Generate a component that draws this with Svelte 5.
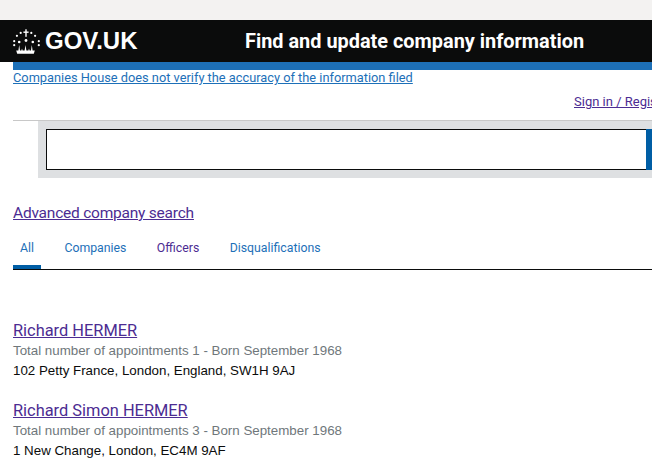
<script>
  const tabs = [
    { label: 'All', active: true },
    { label: 'Companies' },
    { label: 'Officers', visited: true },
    { label: 'Disqualifications' }
  ];

  const results = [
    {
      name: 'Richard HERMER',
      meta: 'Total number of appointments 1 - Born September 1968',
      address: '102 Petty France, London, England, SW1H 9AJ'
    },
    {
      name: 'Richard Simon HERMER',
      meta: 'Total number of appointments 3 - Born September 1968',
      address: '1 New Change, London, EC4M 9AF'
    }
  ];
</script>

<div class="page">
  <div class="topstrip"></div>

  <header class="header">
    <a class="logo" href="#top">
      <svg class="crown" viewBox="0 0 27 25" width="27" height="25" aria-hidden="true">
        <g fill="#fff">
          <rect x="12.3" y="0.3" width="1.4" height="7.5" />
          <rect x="10.4" y="2.5" width="5.2" height="1.4" />
          <circle cx="7.7" cy="3.9" r="1.1" />
          <circle cx="18.3" cy="3.9" r="1.1" />
          <circle cx="3.9" cy="6.8" r="1.1" />
          <circle cx="22.1" cy="6.8" r="1.1" />
          <circle cx="1.2" cy="12.2" r="1.1" />
          <circle cx="25.8" cy="12.2" r="1.1" />
          <circle cx="1.2" cy="16.2" r="1.1" />
          <circle cx="25.8" cy="16.2" r="1.1" />
          <circle cx="13" cy="11.5" r="1.4" />
          <circle cx="6.2" cy="13" r="1.3" />
          <circle cx="19.8" cy="13" r="1.3" />
          <path d="M4.2 24.8 3.2 21.4h2.2l.8-5.4.8 5.4h1.4l.6-2 .6 2h2l.9-5.4.9 5.4h2l.6-2 .6 2h1.4l.8-5.4.8 5.4h2.2l-1 3.4z" />
        </g>
      </svg>
      <span class="wordmark">GOV.UK</span>
    </a>
    <span class="service">Find and update company information</span>
  </header>

  <div class="bluebar"></div>

  <a class="notice" href="#top">Companies House does not verify the accuracy of the information filed</a>

  <div class="signin"><a href="#top">Sign in / Register</a></div>

  <div class="rule"></div>

  <div class="searchband">
    <div class="searchinput"></div>
    <div class="searchbtn"></div>
  </div>

  <a class="advanced" href="#top">Advanced company search</a>

  <nav class="tabs">
    {#each tabs as tab}
      <a href="#top" class="tab" class:active={tab.active} class:visited={tab.visited}>{tab.label}</a>
    {/each}
  </nav>

  <ul class="results">
    {#each results as r}
      <li>
        <a class="name" href="#top">{r.name}</a>
        <p class="meta">{r.meta}</p>
        <p class="address">{r.address}</p>
      </li>
    {/each}
  </ul>
</div>

<style>
  :global(body) {
    margin: 0;
    background: #fff;
    overflow: hidden;
  }

  .page {
    width: 652px;
    height: 468px;
    overflow: hidden;
    font-family: Roboto, sans-serif;
  }

  .topstrip {
    height: 20px;
    background: #f3f2f1;
  }

  .header {
    display: flex;
    align-items: center;
    height: 42px;
    background: #0b0c0c;
    color: #fff;
    padding-left: 13px;
    box-sizing: border-box;
  }

  .logo {
    display: flex;
    align-items: center;
    gap: 5px;
    width: 232px;
    color: #fff;
    text-decoration: none;
  }

  .wordmark {
    font: 700 24px 'Liberation Sans', sans-serif;
  }

  .service {
    font: 700 19.9px Roboto, sans-serif;
    white-space: nowrap;
  }

  .bluebar {
    height: 8px;
    margin-left: 13px;
    background: #1d70b8;
  }

  .notice {
    display: block;
    margin-left: 13px;
    width: max-content;
    font-size: 12.8px;
    line-height: 16px;
    color: #1d70b8;
  }

  .signin {
    margin-top: 8px;
    padding-left: 574px;
    width: 200px;
    font-size: 13px;
    line-height: 16px;
    white-space: nowrap;
  }

  .signin a {
    color: #4c2c92;
  }

  .rule {
    height: 1px;
    margin: 10px 0 0 13px;
    background: #c8c8c8;
  }

  .searchband {
    display: flex;
    height: 57px;
    margin-left: 38px;
    padding: 8px 0;
    box-sizing: border-box;
    background: #dee0e2;
  }

  .searchinput {
    width: 600px;
    height: 41px;
    margin-left: 8px;
    box-sizing: border-box;
    border: 1px solid #0b0c0c;
    border-right: 0;
    background: #fff;
    flex: none;
  }

  .searchbtn {
    flex: none;
    width: 20px;
    height: 41px;
    background: #005ea5;
  }

  .advanced {
    display: block;
    width: max-content;
    margin: 26px 0 0 13px;
    font-size: 15.5px;
    letter-spacing: -0.22px;
    line-height: 18px;
    color: #4c2c92;
  }

  .tabs {
    display: flex;
    height: 30px;
    margin: 17px 0 0 13px;
    border-bottom: 1px solid #0b0c0c;
  }

  .tab {
    display: block;
    height: 30px;
    box-sizing: border-box;
    padding: 0 7px;
    margin-right: 16.4px;
    font-size: 12.3px;
    line-height: 18px;
    color: #1d70b8;
    text-decoration: none;
  }

  .tab.visited {
    color: #4c2c92;
  }

  .tab.active {
    border-bottom: 4px solid #005ea5;
  }

  .results {
    list-style: none;
    margin: 50px 0 0 13px;
    padding: 0;
  }

  .results li {
    margin-bottom: 19px;
  }

  .name {
    display: block;
    width: max-content;
    font-size: 16.4px;
    line-height: 21px;
    color: #4c2c92;
  }

  .meta,
  .address {
    margin: 0;
    font: 13.33px/20px 'Liberation Sans', sans-serif;
  }

  .meta {
    color: #6f777b;
  }

  .address {
    color: #0b0c0c;
  }
</style>
